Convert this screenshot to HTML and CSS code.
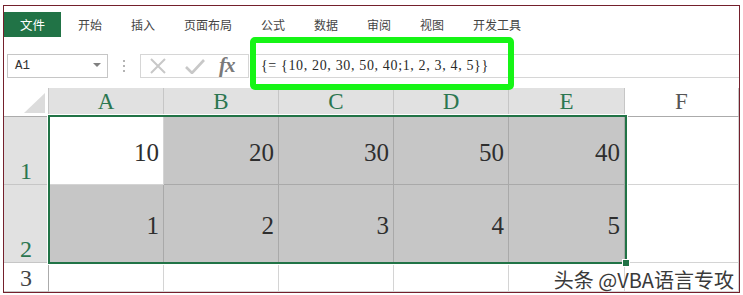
FILE: index.html
```html
<!DOCTYPE html>
<html lang="zh-CN">
<head>
<meta charset="utf-8">
<title>Excel</title>
<link rel="stylesheet" href="styles.css">
</head>
<body>
<div class="frame">
  <div class="ribbon">
    <div class="tab-file">文件</div>
    <div class="tabs">
      <span>开始</span><span>插入</span><span>页面布局</span><span>公式</span><span>数据</span><span>审阅</span><span>视图</span><span>开发工具</span>
    </div>
  </div>

  <div class="fbar">
    <div class="namebox"><span class="nb-text">A1</span><span class="nb-arrow"></span></div>
    <div class="grip">
      <svg width="4" height="12" viewBox="0 0 4 12"><rect x="1" y="0" width="2" height="2" fill="#b4b4b4"/><rect x="1" y="5" width="2" height="2" fill="#b4b4b4"/><rect x="1" y="10" width="2" height="2" fill="#b4b4b4"/></svg>
    </div>
    <div class="btns">
      <svg class="ic-x" width="18" height="16" viewBox="0 0 18 16"><path d="M2 1 L16 15 M16 1 L2 15" stroke="#c8c8c8" stroke-width="2" fill="none"/></svg>
      <svg class="ic-ok" width="20" height="15" viewBox="0 0 20 15"><path d="M1 8 L7 14 L19 1" stroke="#c8c8c8" stroke-width="2.6" fill="none"/></svg>
      <span class="fx">fx</span>
    </div>
    <div class="finput">{= {10, 20, 30, 50, 40;1, 2, 3, 4, 5}}</div>
  </div>

  <div class="sheet">
    <div class="corner"><svg width="21" height="20" viewBox="0 0 21 20"><polygon points="21,0 21,20 0,20" fill="#dcdcdc"/></svg></div>
    <div class="ch sel">A</div>
    <div class="ch sel">B</div>
    <div class="ch sel">C</div>
    <div class="ch sel">D</div>
    <div class="ch sel">E</div>
    <div class="ch">F</div>

    <div class="rh sel">1</div>
    <div class="c">10</div>
    <div class="c g">20</div>
    <div class="c g">30</div>
    <div class="c g">50</div>
    <div class="c g">40</div>
    <div class="c"></div>

    <div class="rh sel">2</div>
    <div class="c g">1</div>
    <div class="c g">2</div>
    <div class="c g">3</div>
    <div class="c g">4</div>
    <div class="c g">5</div>
    <div class="c"></div>

    <div class="rh">3</div>
    <div class="c"></div>
    <div class="c"></div>
    <div class="c"></div>
    <div class="c"></div>
    <div class="c"></div>
    <div class="c"></div>

    <div class="selection"><span class="handle"></span></div>
  </div>

  <div class="highlight"></div>
  <div class="watermark">头条 @VBA语言专攻</div>
</div>
</body>
</html>
```

FILE: styles.css
```css
html, body {
  margin: 0;
  padding: 0;
  background: #ffffff;
}

.frame {
  position: relative;
  box-sizing: border-box;
  width: 737px;
  height: 288px;
  margin: 5px 0 0 3px;
  border: 1px solid #74202c;
  overflow: hidden;
  background: #ffffff;
}

/* ribbon tabs */
.ribbon {
  display: flex;
  align-items: stretch;
  height: 25px;
  padding-top: 6px;
  font-family: "Noto Sans CJK SC", "Noto Sans", sans-serif;
  font-size: 12px;
}

.tab-file {
  width: 57px;
  background: #217346;
  color: #ffffff;
  display: flex;
  align-items: center;
  justify-content: center;
  font-size: 12.5px;
}

.tabs {
  display: flex;
  align-items: center;
  gap: 29px;
  margin-left: 17px;
  color: #444444;
}

/* formula bar */
.fbar {
  display: flex;
  height: 24px;
  margin-top: 17px;
}

.namebox {
  box-sizing: border-box;
  width: 101px;
  margin-left: 3px;
  border: 1px solid #c6c6c6;
  display: flex;
  align-items: center;
  justify-content: space-between;
  padding: 0 6px 0 7px;
}

.nb-text {
  font-family: "Liberation Mono", "DejaVu Sans Mono", monospace;
  font-size: 12.5px;
  color: #333333;
}

.nb-arrow {
  width: 0;
  height: 0;
  border-left: 4px solid transparent;
  border-right: 4px solid transparent;
  border-top: 4px solid #808080;
  margin-top: -2px;
}

.grip {
  width: 32px;
  display: flex;
  align-items: center;
  justify-content: center;
}

.btns {
  box-sizing: border-box;
  width: 109px;
  border: 1px solid #d6d6d6;
  display: flex;
  align-items: center;
  padding-left: 8px;
}

.ic-x { margin-left: 0; }
.ic-ok { margin-left: 18px; }

.fx {
  margin-left: 14px;
  font-family: "Liberation Serif", "DejaVu Serif", serif;
  font-style: italic;
  font-weight: bold;
  font-size: 21px;
  color: #7a7a7a;
  letter-spacing: -1px;
  line-height: 1;
  margin-top: -2px;
}

.finput {
  flex: 1;
  box-sizing: border-box;
  margin-left: 1px;
  border-top: 1px solid #d6d6d6;
  border-bottom: 1px solid #d6d6d6;
  display: flex;
  align-items: center;
  padding-left: 11px;
  font-family: "Liberation Serif", "DejaVu Serif", serif;
  font-size: 14px;
  letter-spacing: 0.65px;
  color: #2a2a2a;
  white-space: pre;
}

/* sheet */
.sheet {
  position: relative;
  display: grid;
  grid-template-columns: 45px 115px 115px 115px 115px 116px 114px;
  grid-template-rows: 29px 68px 78px 29px;
  margin-top: 10px;
  font-family: "Liberation Serif", "DejaVu Serif", serif;
}

.sheet > div {
  box-sizing: border-box;
}

.corner {
  border-right: 1px solid #c6c6c6;
  border-bottom: 1px solid #ababab;
  display: flex;
  align-items: flex-end;
  justify-content: flex-end;
  padding: 0 3px 3px 0;
}

.ch {
  border-right: 1px solid #c6c6c6;
  border-bottom: 1px solid #ababab;
  display: flex;
  align-items: center;
  justify-content: center;
  font-size: 23px;
  color: #555555;
  background: #ffffff;
}

.ch.sel {
  background: #e1e1e1;
  color: #2b7650;
}

.rh {
  border-right: 1px solid #ababab;
  border-bottom: 1px solid #c6c6c6;
  display: flex;
  align-items: flex-end;
  justify-content: center;
  font-size: 24px;
  line-height: 1;
  padding-bottom: 1px;
  color: #444444;
  background: #ffffff;
}

.rh.sel {
  background: #e1e1e1;
  color: #2b7650;
}

.c {
  border-right: 1px solid #d4d4d4;
  border-bottom: 1px solid #d4d4d4;
  display: flex;
  align-items: center;
  justify-content: flex-end;
  padding: 5px 4px 0 0;
  font-size: 25px;
  color: #2e2e2e;
  background: #ffffff;
}

.c.g {
  background: #c6c6c6;
  border-right-color: #a9a9a9;
  border-bottom-color: #a9a9a9;
}

.selection {
  position: absolute;
  left: 44px;
  top: 27px;
  width: 579px;
  height: 149px;
  box-sizing: border-box;
  border: 2px solid #217346;
  box-shadow: 0 0 0 1px #ffffff;
  pointer-events: none;
}

.handle {
  position: absolute;
  right: -5px;
  bottom: -5px;
  width: 6px;
  height: 6px;
  background: #217346;
  border: 1px solid #ffffff;
}

/* annotation */
.highlight {
  position: absolute;
  left: 246px;
  top: 31px;
  width: 264px;
  height: 53px;
  box-sizing: border-box;
  border: 6px solid #16f516;
  border-radius: 5px;
}

.watermark {
  position: absolute;
  right: 5px;
  bottom: 0;
  font-family: "Noto Sans CJK SC", "Noto Sans", sans-serif;
  font-size: 20px;
  line-height: 25px;
  color: #3a3a3a;
  text-shadow: 0 0 2px #ffffff, 0 0 1px #ffffff;
}
```
